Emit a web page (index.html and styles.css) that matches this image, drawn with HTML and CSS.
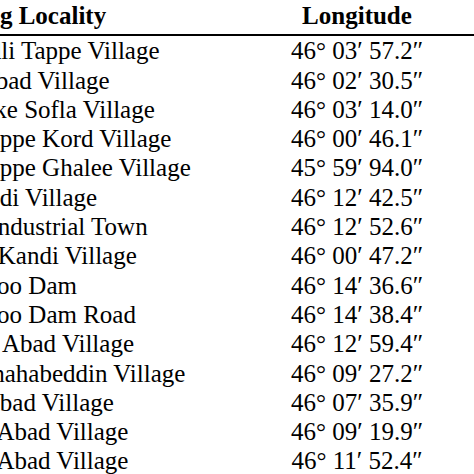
FILE: index.html
```html
<!DOCTYPE html>
<html lang="en">
<head>
<meta charset="utf-8">
<title>Sampling localities</title>
<link rel="stylesheet" href="styles.css">
</head>
<body>
<table class="loc-table">
  <colgroup><col class="col-name"><col class="col-lon"></colgroup>
  <thead>
    <tr><th class="name">Sampling Locality</th><th class="lon">Longitude</th></tr>
  </thead>
  <tbody>
    <tr><td class="name">Ghuzandli Tappe Village</td><td class="lon">46° 03′ 57.2″</td></tr>
    <tr><td class="name">Heydarabad Village</td><td class="lon">46° 02′ 30.5″</td></tr>
    <tr><td class="name">Chaharake Sofla Village</td><td class="lon">46° 03′ 14.0″</td></tr>
    <tr><td class="name">Shahr Tappe Kord Village</td><td class="lon">46° 00′ 46.1″</td></tr>
    <tr><td class="name">Shahr Tappe Ghalee Village</td><td class="lon">45° 59′ 94.0″</td></tr>
    <tr><td class="name">Amirkandi Village</td><td class="lon">46° 12′ 42.5″</td></tr>
    <tr><td class="name">Saqqez Industrial Town</td><td class="lon">46° 12′ 52.6″</td></tr>
    <tr><td class="name">Gholam Kandi Village</td><td class="lon">46° 00′ 47.2″</td></tr>
    <tr><td class="name">Chasanboo Dam</td><td class="lon">46° 14′ 36.6″</td></tr>
    <tr><td class="name">Chasanboo Dam Road</td><td class="lon">46° 14′ 38.4″</td></tr>
    <tr><td class="name">Ebrahim Abad Village</td><td class="lon">46° 12′ 59.4″</td></tr>
    <tr><td class="name">Seyed Shahabeddin Village</td><td class="lon">46° 09′ 27.2″</td></tr>
    <tr><td class="name">Rahmatabad Village</td><td class="lon">46° 07′ 35.9″</td></tr>
    <tr><td class="name">Gholam Abad Village</td><td class="lon">46° 09′ 19.9″</td></tr>
    <tr><td class="name">Hossein Abad Village</td><td class="lon">46° 11′ 52.4″</td></tr>
  </tbody>
</table>
</body>
</html>
```
FILE: styles.css
```css
html, body {
  margin: 0;
  padding: 0;
  background: #fff;
  overflow: hidden;
}
body {
  width: 474px;
  height: 474px;
  color: #000;
  font-family: "Liberation Serif", "Times New Roman", serif;
}
.loc-table {
  border-collapse: collapse;
  table-layout: fixed;
  width: 563px;
  margin-left: -89px;
  font-family: "Liberation Serif", "Times New Roman", serif;
  font-size: 25px;
  line-height: 29.3px;
}
.col-name { width: 329px; }
.col-lon { width: 234px; }
.loc-table th,
.loc-table td {
  padding: 0;
  white-space: nowrap;
  overflow: visible;
}
.loc-table th {
  font-weight: bold;
  padding-top: 1px;
  padding-bottom: 4px;
  border-bottom: 2px solid #000;
}
.loc-table .name { text-align: left; }
.loc-table .lon { text-align: center; }
```
